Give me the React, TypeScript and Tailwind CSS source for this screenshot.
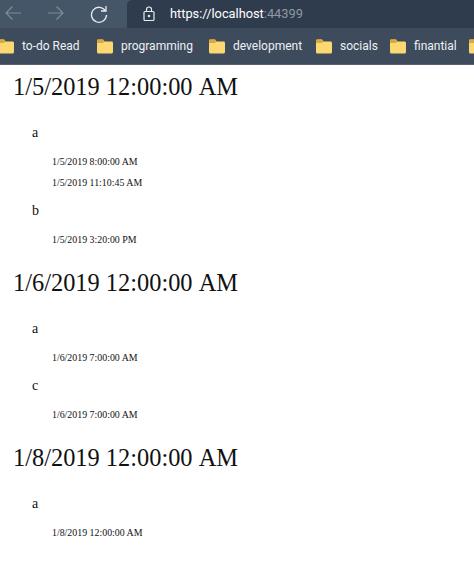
import React from "react";

const Folder = () => (
  <svg width="16" height="15" viewBox="0 0 16 15" className="shrink-0">
    <path d="M0 2C0 1 .6.500 1.500.500H6L7.500 2.500H14.500C15.400 2.500 16 3.100 16 4V13c0 .9-.6 1.500-1.500 1.500h-13C.6 14.500 0 13.900 0 13Z" fill="#fbd872" />
    <path d="M0 2C0 1 .6.500 1.500.500H6L7.500 2.500 6 4H0Z" fill="#d9a93c" />
  </svg>
);

const Bookmark = ({ label, className }: { label: string; className: string }) => (
  <div className={`flex items-center gap-[8px] ${className}`}>
    <Folder />
    <span className="text-[12px] leading-none text-[#eef1f4] font-['Roboto',sans-serif] whitespace-nowrap">{label}</span>
  </div>
);

const Group = ({ title, items }: { title: string; items: [string, string[]][] }) => (
  <section>
    <h1 className="text-[24.4px] leading-[27px] text-[#111] [font-kerning:none] -ml-px">{title}</h1>
    <div className="pl-[18px] pt-[25px]">
      {items.map(([name, times]) => (
        <div key={name} className="mb-[14px]">
          <h3 className="text-[14px] leading-[16px] text-[#111]">{name}</h3>
          <div className="pl-[20px] pt-[15px]">
            {times.map((t) => (
              <p key={t} className="text-[9.9px] leading-[12px] mb-[9px] text-[#111] whitespace-nowrap">{t}</p>
            ))}
          </div>
        </div>
      ))}
    </div>
  </section>
);

export default function App() {
  return (
    <div className="w-[474px] h-[574px] overflow-hidden bg-white font-['Liberation_Serif',serif]">
      <header className="h-[65px] bg-[#3d4b5d] border-b border-[#59636f]">
        <div className="h-[28px] flex items-center bg-[#465669]">
          <div className="flex items-center w-[127px] shrink-0">
            <svg width="16" height="14" viewBox="0 0 16 14" className="ml-[5px] -mt-[2px]" fill="none" stroke="#7e8b9a" strokeWidth="1.200"><path d="M16 7H1M7.500 .5 1 7l6.500 6.500" /></svg>
            <svg width="16" height="14" viewBox="0 0 16 14" className="ml-[27px] -mt-[2px]" fill="none" stroke="#7e8b9a" strokeWidth="1.200"><path d="M0 7h15M8.500 .5 15 7l-6.500 6.500" /></svg>
            <svg width="18" height="18" viewBox="0 0 18 18" className="ml-[26px]" fill="none" stroke="#e8ebee" strokeWidth="1.300"><path d="M15.500 6A7.500 7.500 0 1 0 16.500 10M16 1v5h-5" /></svg>
          </div>
          <div className="flex-1 h-[28px] bg-[#2f3c4d] rounded-tl-[5px] flex items-center">
            <svg width="14" height="16" viewBox="0 0 14 16" className="ml-[15px]" fill="none" stroke="#e8ebee" strokeWidth="1.200"><rect x="2" y="5.500" width="10" height="9" rx="1" /><path d="M4.500 5.500V3.500a2.500 2.500 0 0 1 5 0v2" /><circle cx="7" cy="10" r=".7" fill="#e8ebee" /></svg>
            <span className="ml-[14px] text-[12.800px] font-['Roboto',sans-serif] text-white">https://localhost<span className="text-[#8f99a5]">:44399</span></span>
          </div>
        </div>
        <div className="h-[36px] flex items-center">
          <div className="flex items-center -ml-[2px]">
            <Bookmark label="to-do Read" className="w-[99px]" />
            <Bookmark label="programming" className="w-[112px]" />
            <Bookmark label="development" className="w-[107px]" />
            <Bookmark label="socials" className="w-[74px]" />
            <Bookmark label="finantial" className="w-[79px]" />
            <Folder />
          </div>
        </div>
      </header>
      <main className="pl-[14px] pt-[8px] flex flex-col gap-[9px]">
        <Group title="1/5/2019 12:00:00 AM" items={[["a", ["1/5/2019 8:00:00 AM", "1/5/2019 11:10:45 AM"]], ["b", ["1/5/2019 3:20:00 PM"]]]} />
        <Group title="1/6/2019 12:00:00 AM" items={[["a", ["1/6/2019 7:00:00 AM"]], ["c", ["1/6/2019 7:00:00 AM"]]]} />
        <Group title="1/8/2019 12:00:00 AM" items={[["a", ["1/8/2019 12:00:00 AM"]]]} />
      </main>
    </div>
  );
}
